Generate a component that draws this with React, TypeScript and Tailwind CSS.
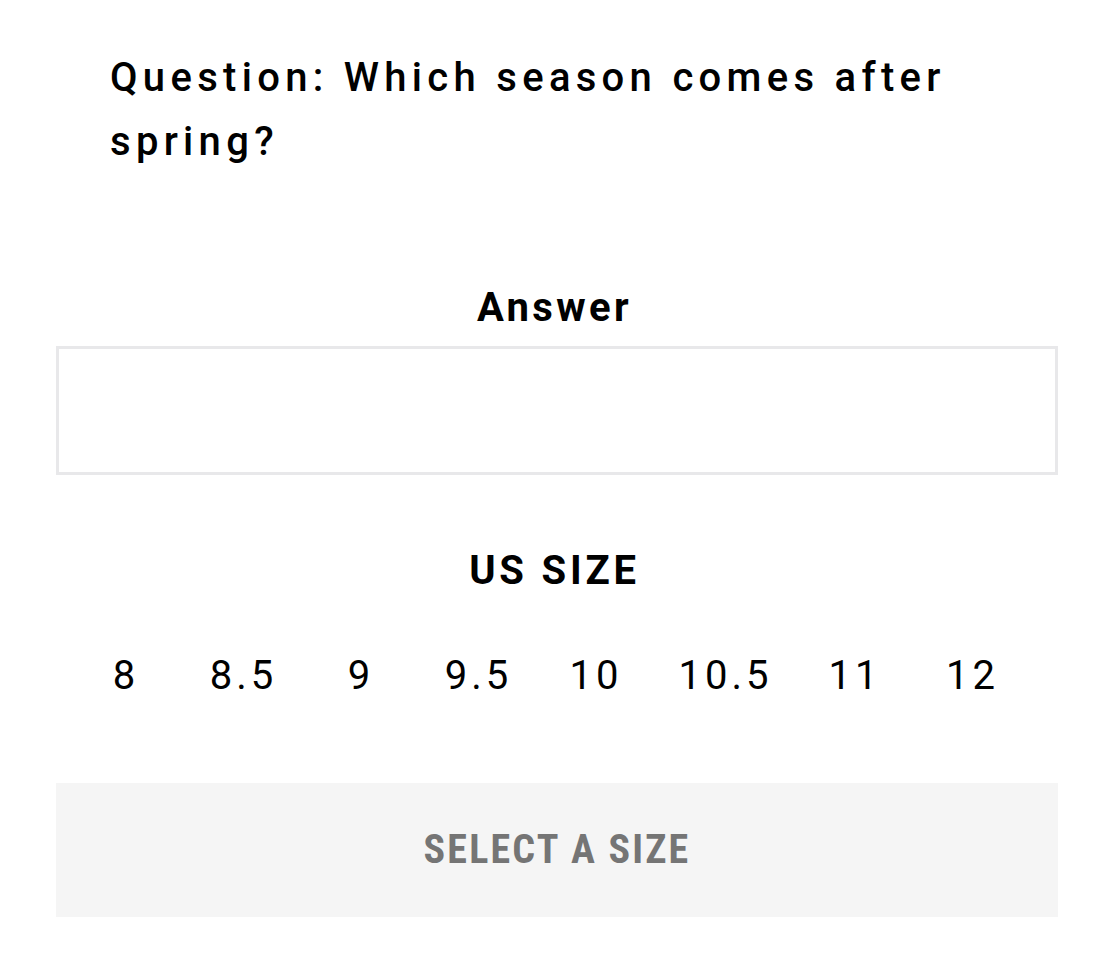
import React from "react";

const sizes = ["8", "8.5", "9", "9.5", "10", "10.5", "11", "12"];

export default function App() {
  return (
    <div className="min-h-[962px] w-[1118px] bg-white font-['Roboto','Liberation_Sans',sans-serif] text-black">
      <div className="mx-[56px] w-[1002px] pt-[46px]">
        <p className="px-[54px] text-[40px] font-medium leading-[64px] tracking-[5.3px]">
          Question: Which season comes after spring?
        </p>
        <h2 className="mt-[114px] pr-[5px] text-center text-[40px] font-bold leading-[40px] tracking-[3.4px]">
          Answer
        </h2>
        <input
          type="text"
          aria-label="Answer"
          className="mt-[18px] block h-[129px] w-full border-[3px] border-[#e8e8ea] bg-white outline-none"
        />
        <h3 className="mt-[76px] pr-[5px] text-center text-[40px] font-bold leading-[40px] tracking-[3.8px]">
          US SIZE
        </h3>
        <div className="mt-[65px] flex justify-start gap-[47.5px] pl-[35px] text-[40px] leading-[40px] tracking-[4px]">
          {sizes.map((s) => (
            <button key={s} type="button" className="min-w-[70px] cursor-pointer text-center">
              {s}
            </button>
          ))}
        </div>
        <button
          type="button"
          className="mt-[87px] flex h-[134px] w-full items-center justify-center bg-[#f5f5f5]"
        >
          <span className="text-[40px] font-bold tracking-[2.2px] text-[#757575] font-stretch-condensed">
            SELECT A SIZE
          </span>
        </button>
      </div>
    </div>
  );
}
